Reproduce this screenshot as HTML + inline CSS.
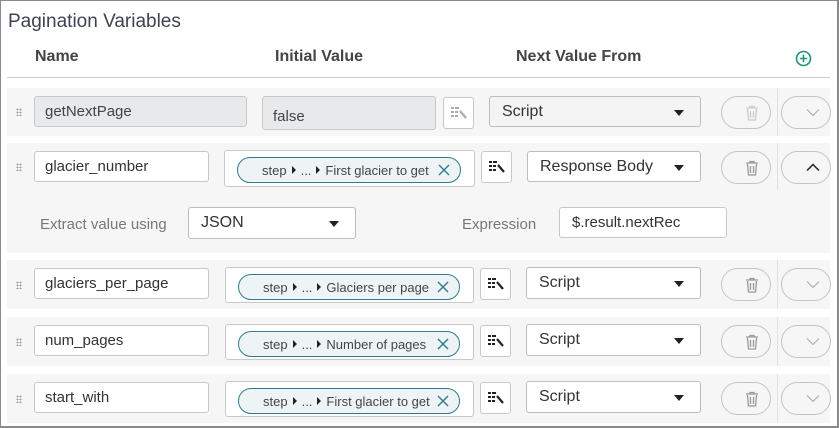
<!DOCTYPE html>
<html><head><meta charset="utf-8"><style>
*{box-sizing:border-box;margin:0;padding:0}
body{width:839px;height:428px;background:#fff;font-family:"Liberation Sans",sans-serif;color:#333;position:relative;overflow:hidden}
.frame{position:absolute;left:0;top:0;width:839px;height:428px;border:1px solid #8a8a8a;border-right:2px solid #8a8a8a;border-bottom:2px solid #8a8a8a}
.a{position:absolute}
.t{font-size:19px;color:#3d4451;left:8px;top:11px}
.h{font-size:16px;font-weight:bold;color:#444;top:48px}
.row{position:absolute;left:7px;width:823px;background:#f6f6f6}
.inp{position:absolute;border:1px solid #c8c8c8;border-radius:3px;background:#fff;font-size:15px;color:#333;padding-left:10px;display:flex;align-items:center}
.dis{background:#e8e9ea;color:#444}
.sel{position:absolute;border:1px solid #bdbdbd;border-radius:3px;background:#fff;font-size:16px;padding-left:12px;display:flex;align-items:center;color:#333}
.sel:after{content:"";position:absolute;right:16px;top:50%;margin-top:-2px;border-left:5px solid transparent;border-right:5px solid transparent;border-top:6px solid #222}
.pill{position:absolute;border:1.3px solid #2e7d8e;border-radius:14px;background:#eef4f5;font-size:13px;color:#444;display:flex;align-items:center;padding-left:24px}
.pill .x{position:absolute;right:8px;top:4px}
.tri{display:inline-block;border-top:4px solid transparent;border-bottom:4px solid transparent;border-left:4px solid #222;margin:0 5px}
.btn{position:absolute;border:1px solid #c8c8c8;border-radius:3px;background:#fff;width:31px;height:32px;display:flex;align-items:center;justify-content:center}
.rp{position:absolute;border:1px solid #c4c4c4;border-radius:17px;width:50px;height:33px;display:flex;align-items:center;justify-content:center;background:#f6f6f6}
.rp.del{padding-left:12px}
.rp.chev{padding-left:13px}
.div{position:absolute;left:777px;width:1px;background:#e2e2e2}
.drag{position:absolute;left:16px;width:6px;height:8px;background-image:radial-gradient(circle,#999 0.8px,transparent 1px);background-size:3px 3px}
.lbl{font-size:15px;color:#777}
</style></head><body>
<div class="frame"></div>
<div class="a t">Pagination Variables</div>
<div class="a h" style="left:35px">Name</div>
<div class="a h" style="left:275px">Initial Value</div>
<div class="a h" style="left:516px">Next Value From</div>
<svg class="a" style="left:795px;top:50px" width="17" height="17" viewBox="0 0 17 17"><circle cx="8.5" cy="8.5" r="7" fill="none" stroke="#1e9478" stroke-width="1.6"/><path d="M8.5 4.8v7.4M4.8 8.5h7.4" stroke="#1e9478" stroke-width="1.6"/></svg>
<div class="a" style="left:7px;top:77px;width:823px;height:1px;background:#ccc"></div>

<!-- row1 -->
<div class="row" style="top:88px;height:48px"></div>
<div class="drag" style="top:108px"></div>
<div class="inp dis" style="left:34px;top:96px;width:213px;height:31px">getNextPage</div>
<div class="inp dis" style="left:262px;top:96px;width:174px;height:34px;padding-top:6px">false</div>
<div class="btn" style="left:443px;top:97px"><svg width="18" height="16" viewBox="0 0 18 16"><g fill="#aaa"><rect x="1" y="2" width="3" height="2"/><rect x="5" y="2" width="4" height="2"/><rect x="1" y="6" width="3" height="2"/><rect x="5" y="6" width="3" height="2"/><rect x="1" y="10" width="3" height="2"/><rect x="5" y="10" width="3" height="2"/></g><path d="M10 6l6 7" stroke="#aaa" stroke-width="2.2"/></svg></div>
<div class="sel" style="left:489px;top:96px;width:212px;height:31px;background:#f4f4f4">Script</div>
<div class="rp del" style="left:721px;top:96px"><svg width="14" height="16" viewBox="0 0 14 16"><path d="M1 3h12M5 3V1.5h4V3M2.5 4l1 11h7l1-11M5.5 6v7M8.5 6v7" fill="none" stroke="#ccc" stroke-width="1.3"/></svg></div>
<div class="div" style="top:88px;height:48px"></div>
<div class="rp chev" style="left:781px;top:96px"><svg width="14" height="9" viewBox="0 0 14 9"><path d="M1 1.5l6 6 6-6" fill="none" stroke="#aaa" stroke-width="1.1"/></svg></div>

<!-- row2 -->
<div class="row" style="top:143px;height:110px"></div>
<div class="drag" style="top:163px"></div>
<div class="inp" style="left:34px;top:151px;width:175px;height:31px">glacier_number</div>
<div class="inp" style="left:224px;top:150px;width:251px;height:37px"></div>
<div class="pill" style="left:237px;top:157px;width:224px;height:26px">step<span class="tri"></span>...<span class="tri"></span>First glacier to get<svg class="x" width="16" height="16" viewBox="0 0 16 16"><path d="M3 3l10 10M13 3L3 13" stroke="#2e7d8e" stroke-width="1.4"/></svg></div>
<div class="btn wand" style="left:481px;top:151px"></div>
<div class="sel" style="left:527px;top:151px;width:174px;height:31px">Response Body</div>
<div class="rp del" style="left:721px;top:151px"><svg width="14" height="16" viewBox="0 0 14 16"><path d="M1 3h12M5 3V1.5h4V3M2.5 4l1 11h7l1-11M5.5 6v7M8.5 6v7" fill="none" stroke="#999" stroke-width="1.3"/></svg></div>
<div class="div" style="top:143px;height:47px"></div>
<div class="rp chev" style="left:781px;top:151px"><svg width="14" height="9" viewBox="0 0 14 9"><path d="M1 7.5l6-6 6 6" fill="none" stroke="#222" stroke-width="1.5"/></svg></div>
<div class="a lbl" style="left:40px;top:216px">Extract value using</div>
<div class="sel" style="left:188px;top:207px;width:168px;height:32px">JSON</div>
<div class="a lbl" style="left:462px;top:216px">Expression</div>
<div class="inp" style="left:559px;top:207px;width:168px;height:31px;padding-left:12px">$.result.nextRec</div>

<div id="rows"></div>
<script>
var d=[["glaciers_per_page","Glaciers per page",260],["num_pages","Number of pages",317],[" start_with","First glacier to get",374]];
var h="";
d.forEach(function(r){var y=r[2];
h+='<div class="row" style="top:'+y+'px;height:49px"></div>'+
'<div class="drag" style="top:'+(y+21)+'px"></div>'+
'<div class="inp" style="left:34px;top:'+(y+8)+'px;width:175px;height:31px">'+r[0]+'</div>'+
'<div class="inp" style="left:225px;top:'+(y+7)+'px;width:249px;height:36px"></div>'+
'<div class="pill" style="left:238px;top:'+(y+14)+'px;width:222px;height:26px">step<span class="tri"></span>...<span class="tri"></span>'+r[1]+'<svg class="x" width="16" height="16" viewBox="0 0 16 16"><path d="M3 3l10 10M13 3L3 13" stroke="#2e7d8e" stroke-width="1.4"/></svg></div>'+
'<div class="btn wand" style="left:480px;top:'+(y+8)+'px"></div>'+
'<div class="sel" style="left:526px;top:'+(y+7)+'px;width:175px;height:32px">Script</div>'+
'<div class="rp del" style="left:721px;top:'+(y+8)+'px"><svg width="14" height="16" viewBox="0 0 14 16"><path d="M1 3h12M5 3V1.5h4V3M2.5 4l1 11h7l1-11M5.5 6v7M8.5 6v7" fill="none" stroke="#999" stroke-width="1.3"/></svg></div>'+
'<div class="div" style="top:'+y+'px;height:49px"></div>'+
'<div class="rp chev" style="left:781px;top:'+(y+8)+'px"><svg width="14" height="9" viewBox="0 0 14 9"><path d="M1 1.5l6 6 6-6" fill="none" stroke="#aaa" stroke-width="1.1"/></svg></div>';
});
document.getElementById("rows").innerHTML=h;
var w='<svg width="18" height="16" viewBox="0 0 18 16"><g fill="#222"><rect x="1" y="2" width="3" height="2"/><rect x="5" y="2" width="4" height="2"/><rect x="1" y="6" width="3" height="2"/><rect x="5" y="6" width="3" height="2"/><rect x="1" y="10" width="3" height="2"/><rect x="5" y="10" width="3" height="2"/></g><path d="M10 6l6 7" stroke="#222" stroke-width="2.2"/></svg>';
document.querySelectorAll(".wand").forEach(function(e){e.innerHTML=w});
</script>
</body></html>
